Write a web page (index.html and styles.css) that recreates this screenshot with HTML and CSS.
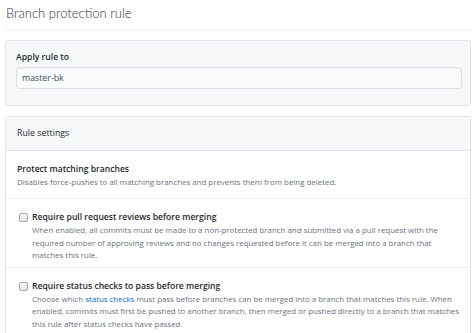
FILE: index.html
```html
<!DOCTYPE html>
<html lang="en">
<head>
    <meta charset="UTF-8">
    <title>Branch protection rule</title>
    <link rel="stylesheet" href="styles.css">
</head>
<body>
    <div class="page">
        <div class="subhead">
            <h2>Branch protection rule</h2>
        </div>

        <div class="box apply-box">
            <label class="field-label" for="pattern">Apply rule to</label>
            <input class="field-input" id="pattern" type="text" value="master-bk">
        </div>

        <div class="box settings-box">
            <div class="box-header">Rule settings</div>

            <div class="box-row first-row">
                <div class="row-title">Protect matching branches</div>
                <p class="note">Disables force-pushes to all matching branches and prevents them from being deleted.</p>
            </div>

            <div class="box-row">
                <div class="check-item">
                    <span class="checkbox"></span>
                    <div class="row-title">Require pull request reviews before merging</div>
                    <p class="note">When enabled, all commits must be made to a non-protected branch and submitted via a pull request with the required number of approving reviews and no changes requested before it can be merged into a branch that matches this rule.</p>
                </div>
            </div>

            <div class="box-row">
                <div class="check-item">
                    <span class="checkbox"></span>
                    <div class="row-title">Require status checks to pass before merging</div>
                    <p class="note">Choose which <a href="#">status checks</a> must pass before branches can be merged into a branch that matches this rule. When enabled, commits must first be pushed to another branch, then merged or pushed directly to a branch that matches this rule after status checks have passed.</p>
                </div>
            </div>
        </div>
    </div>
</body>
</html>
```

FILE: styles.css
```css
* {
    margin: 0;
    padding: 0;
    box-sizing: border-box;
}

body {
    background-color: #fff;
    color: #24292e;
    font-family: 'Open Sans', 'Noto Sans', sans-serif;
    overflow: hidden;
}

.page {
    padding: 0 3px 0 5px;
}

.subhead {
    padding: 2px 0 5px 1px;
    border-bottom: 1px solid #eaecef;
}

.subhead h2 {
    font-family: 'Lato', 'Open Sans', sans-serif;
    font-size: 13px;
    font-weight: 300;
    line-height: 22px;
    color: #2f3439;
}

.box {
    margin-top: 10px;
    border: 1px solid #e1e4e8;
    border-radius: 3px;
}

.apply-box {
    background-color: #f6f8fa;
    padding: 9px 8px 16px 10px;
}

.field-label {
    display: block;
    font-size: 8.6px;
    font-weight: 600;
    line-height: 14px;
    margin-bottom: 3px;
}

.field-input {
    display: block;
    width: 100%;
    height: 22px;
    padding: 0 5px;
    font-family: inherit;
    font-size: 8.8px;
    color: #444d56;
    background-color: #fafbfc;
    border: 1px solid #dfe2e5;
    border-radius: 3px;
    box-shadow: inset 0 1px 2px rgba(27, 31, 35, 0.06);
}

.box-header {
    background-color: #f6f8fa;
    border-bottom: 1px solid #e1e4e8;
    padding: 0 11px;
    font-size: 8.8px;
    line-height: 33px;
}

.box-row {
    padding: 12px 10px 6px 11px;
    border-top: 1px solid #eaecef;
}

.first-row {
    border-top: 0;
    padding-bottom: 10px;
}

.row-title {
    font-size: 8.6px;
    font-weight: 600;
    line-height: 13px;
}

.note {
    font-size: 7.9px;
    line-height: 12.3px;
    color: #6a737d;
}

.note a {
    color: #0366d6;
    text-decoration: none;
}

.check-item {
    display: grid;
    grid-template-columns: 15px 1fr;
    align-items: center;
}

.check-item .row-title,
.check-item .note {
    grid-column: 2;
}

.checkbox {
    grid-column: 1;
    grid-row: 1;
    width: 9px;
    height: 9px;
    margin-left: 2px;
    border: 1px solid #a3a8ae;
    border-radius: 2px;
    background: linear-gradient(#f7f8f9, #e4e7ea);
}
```
